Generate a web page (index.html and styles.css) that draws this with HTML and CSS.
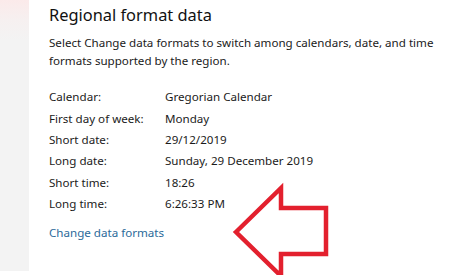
FILE: index.html
```
<!DOCTYPE html>
<html>
<head>
<meta charset="utf-8">
<link rel="stylesheet" href="styles.css">
</head>
<body>
<div class="page">
  <div class="sidebar"></div>
  <div class="main">
    <h1 class="title">Regional format data</h1>
    <p class="desc">Select Change data formats to switch among calendars, date, and time formats supported by the region.</p>
    <div class="rows">
      <div class="label">Calendar:</div><div class="value">Gregorian Calendar</div>
      <div class="label">First day of week:</div><div class="value">Monday</div>
      <div class="label">Short date:</div><div class="value">29/12/2019</div>
      <div class="label">Long date:</div><div class="value">Sunday, 29 December 2019</div>
      <div class="label">Short time:</div><div class="value">18:26</div>
      <div class="label">Long time:</div><div class="value">6:26:33 PM</div>
    </div>
    <a class="link" href="#">Change data formats</a>
  </div>
  <svg class="arrow" width="100" height="100" viewBox="0 0 100 100">
    <polygon points="4,57 49,13 49,33 94,33 94,79 49,79 49,101" fill="none" stroke="#e3202e" stroke-width="4.5" stroke-linejoin="miter"/>
  </svg>
</div>
</body>
</html>
```
FILE: styles.css
```
html, body {
  margin: 0;
  padding: 0;
  background: #ffffff;
}
.page {
  position: relative;
  width: 474px;
  height: 275px;
  overflow: hidden;
  display: flex;
  font-family: "Noto Sans", "Open Sans", sans-serif;
  color: #1b1b1b;
}
.sidebar {
  width: 29px;
  height: 271px;
  flex: none;
  background: linear-gradient(to bottom, #fbeaea 0px, #f6f0f0 20px, #f3f3f3 40px, #f3f3f3 100%);
}
.main {
  padding-left: 20px;
  padding-top: 3px;
}
.title {
  margin: 0;
  font-size: 16.4px;
  font-weight: 400;
  line-height: 23px;
  color: #111;
}
.desc {
  margin: 8px 0 0 0;
  width: 420px;
  font-size: 11.6px;
  line-height: 18px;
}
.rows {
  margin-top: 16px;
  display: grid;
  grid-template-columns: 116px auto;
  grid-auto-rows: 21.4px;
  font-size: 11.6px;
  align-items: center;
}
.link {
  display: block;
  margin-top: 11px;
  font-size: 11.6px;
  color: #2b6a9a;
  text-decoration: none;
}
.arrow {
  position: absolute;
  left: 232px;
  top: 175px;
}
```
